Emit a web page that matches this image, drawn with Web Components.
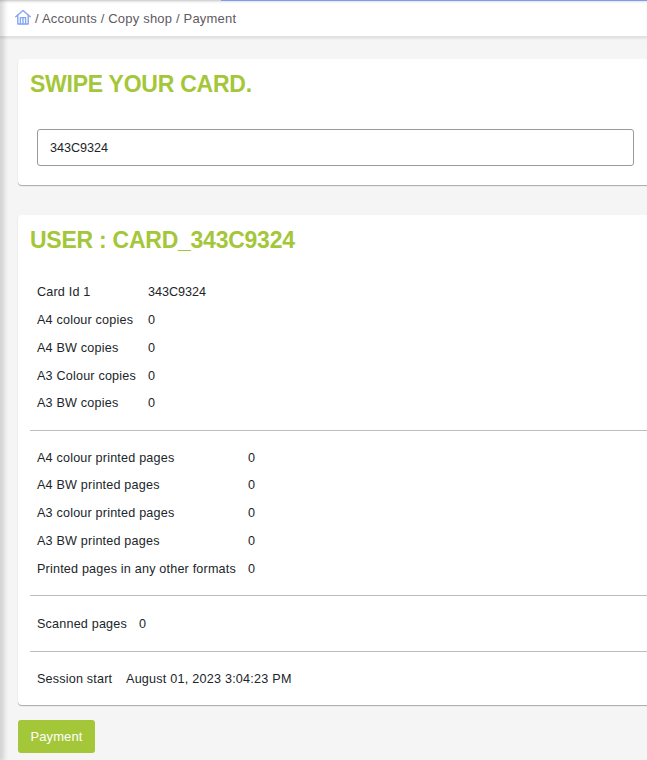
<!DOCTYPE html>
<html>
<head>
<meta charset="utf-8">
<title>Payment</title>
<style>
  html, body { margin: 0; height: 100%; overflow: hidden; }
  body { background: #f5f5f5; font-family: "Liberation Sans", Arial, sans-serif; font-size: 12.6px; color: #212529; }
  page-shell { height: 760px; }
</style>
</head>
<body>

<page-shell>
  <bread-crumbs slot="top"></bread-crumbs>
  <content-card title="SWIPE YOUR CARD.">
    <card-input value="343C9324"></card-input>
  </content-card>
  <content-card title="USER : CARD_343C9324">
    <stat-list first="111" style="--pt:24.4px;--pb:13px" rows='[["Card Id 1","343C9324"],["A4 colour copies","0"],["A4 BW copies","0"],["A3 Colour copies","0"],["A3 BW copies","0"]]'></stat-list>
    <stat-list first="211" style="--pt:12.6px;--pb:12.6px" rows='[["A4 colour printed pages","0"],["A4 BW printed pages","0"],["A3 colour printed pages","0"],["A3 BW printed pages","0"],["Printed pages in any other formats","0"]]'></stat-list>
    <stat-list first="102" style="--pt:14px;--pb:13.25px" rows='[["Scanned pages","0"]]'></stat-list>
    <stat-list first="89" last style="--pt:13px;--pb:12.25px" rows='[["Session start","August 01, 2023 3:04:23 PM"]]'></stat-list>
  </content-card>
  <pay-button>Payment</pay-button>
</page-shell>

<script>
class PageShell extends HTMLElement {
  constructor() {
    super();
    this.attachShadow({ mode: 'open' }).innerHTML = `
      <style>
        :host { display: block; position: relative; overflow: hidden; }
        .progress { position: absolute; top: 0; left: 221px; right: 0; height: 1px; background: #7b9cf0; z-index: 3; }
        .side { position: absolute; top: 0; left: 0; bottom: 0; width: 0; box-shadow: 0 0 6px 2px rgba(0,0,0,.3); z-index: 2; }
        main { display: flex; flex-direction: column; align-items: flex-start; padding: 22px 0 0 18px; }
      </style>
      <div class="progress"></div>
      <div class="side"></div>
      <slot name="top"></slot>
      <main><slot></slot></main>
    `;
  }
}

class BreadCrumbs extends HTMLElement {
  constructor() {
    super();
    this.attachShadow({ mode: 'open' }).innerHTML = `
      <style>
        :host { display: block; height: 37px; box-sizing: border-box; background: #fff; border-bottom: 1px solid #e2e2e2; box-shadow: 0 1px 3px rgba(0,0,0,.12), inset 0 3px 3px -2px rgba(0,0,0,.25); }
        nav { display: flex; align-items: center; gap: 4px; height: 36px; padding-left: 15px; color: #5f5a5f; font-size: 13px; letter-spacing: .19px; }
        svg { width: 16px; height: 16px; flex: none; margin-top: -2px; }
      </style>
      <nav>
        <svg viewBox="0 0 16 16" fill="none" stroke="#86a5f5" stroke-width="1.4" stroke-linejoin="round" stroke-linecap="round">
          <path d="M.8 7.8 8 1.4l7.2 6.4"/>
          <path d="M2.8 6.2v8.8h10.4V6.2"/>
          <path d="M5.4 15V8.6h5.2V15"/>
          <path d="M8 8.8V15"/>
        </svg>
        <span>/ Accounts / Copy shop / Payment</span>
      </nav>
    `;
  }
}

class ContentCard extends HTMLElement {
  constructor() {
    super();
    this.attachShadow({ mode: 'open' }).innerHTML = `
      <style>
        :host { display: block; width: 640px; margin-bottom: 30px; box-sizing: border-box; background: #fff; border-radius: 4px 0 0 4px; box-shadow: 0 1px 1px rgba(0,0,0,.32); padding: 12px 0 0 12px; }
        h2 { margin: 0; font-size: 23px; letter-spacing: -.25px; line-height: 27px; font-weight: 700; color: #a4c639; }
      </style>
      <h2></h2>
      <slot></slot>
    `;
  }

  connectedCallback() {
    this.shadowRoot.querySelector('h2').textContent = this.getAttribute('title');
  }
}

class CardInput extends HTMLElement {
  constructor() {
    super();
    this.attachShadow({ mode: 'open' }).innerHTML = `
      <style>
        :host { display: block; padding: 31px 0 19px 7px; }
        input { display: block; box-sizing: border-box; width: 597px; height: 37px; padding: 0 12px; border: 1px solid #9a9a9a; border-radius: 3px; background: #fff; color: #212529; font: 12.6px "Liberation Sans", Arial, sans-serif; outline: 0; }
      </style>
      <input type="text">
    `;
  }

  connectedCallback() {
    this.shadowRoot.querySelector('input').value = this.getAttribute('value');
  }
}

class StatList extends HTMLElement {
  constructor() {
    super();
    this.attachShadow({ mode: 'open' }).innerHTML = `
      <style>
        :host { display: block; border-bottom: 1px solid #bdbdbd; padding: var(--pt) 0 var(--pb); }
        :host([last]) { border-bottom: 0; }
        .row { display: flex; height: 27.75px; align-items: center; padding-left: 7px; color: #212529; }
        .label { flex: none; white-space: nowrap; letter-spacing: .19px; }
        .long { letter-spacing: .23px; }
      </style>
      <div class="rows"></div>
    `;
  }

  connectedCallback() {
    const first = this.getAttribute('first');
    const rows = JSON.parse(this.getAttribute('rows'));
    this.shadowRoot.querySelector('.rows').innerHTML = rows.map(r => `
      <div class="row"><span class="label" style="width:${first}px">${r[0]}</span><span class="${r[1].includes(' ') ? 'long' : ''}">${r[1]}</span></div>
    `).join('');
  }
}

class PayButton extends HTMLElement {
  constructor() {
    super();
    this.attachShadow({ mode: 'open' }).innerHTML = `
      <style>
        :host { display: block; margin-top: -15px; }
        button { display: block; width: 77px; height: 33px; padding: 0; border: 0; border-radius: 3px; background: #a4c639; color: #fff; font: 13px "Liberation Sans", Arial, sans-serif; letter-spacing: .1px; }
      </style>
      <button><slot></slot></button>
    `;
  }
}

customElements.define('page-shell', PageShell);
customElements.define('bread-crumbs', BreadCrumbs);
customElements.define('content-card', ContentCard);
customElements.define('card-input', CardInput);
customElements.define('stat-list', StatList);
customElements.define('pay-button', PayButton);
</script>
</body>
</html>
